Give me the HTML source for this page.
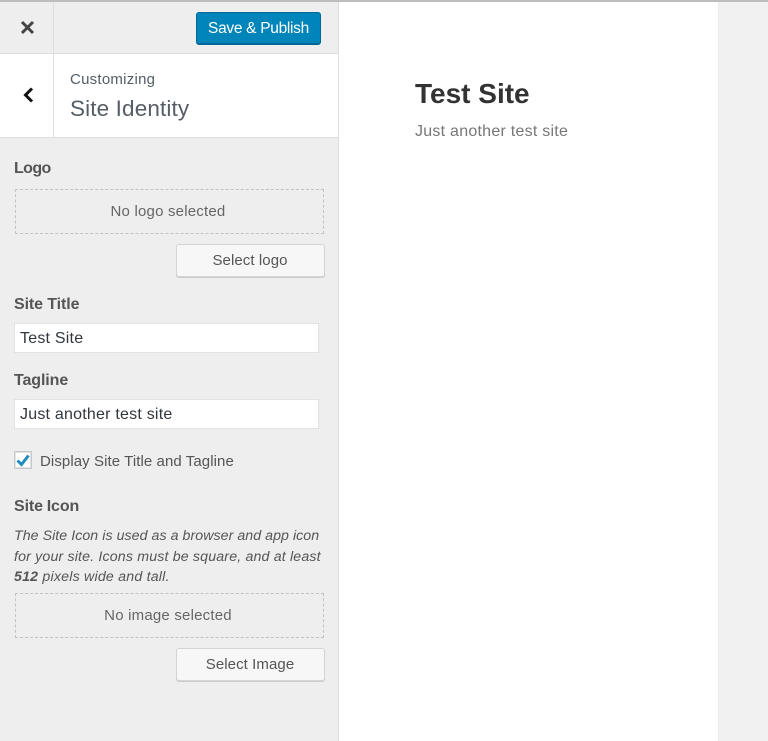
<!DOCTYPE html>
<html><head><meta charset="utf-8"><style>
*{box-sizing:border-box}
html,body{margin:0;padding:0;width:768px;height:741px;overflow:hidden;background:#fff;font-family:"Liberation Sans",sans-serif}
.a{position:absolute;white-space:nowrap}
.l{font-weight:bold;color:#555;font-size:16px;line-height:20px}
.t{color:#555d66}
.box{position:absolute;left:15px;width:309px;height:45px;border:1px dashed #c2c2c2;text-align:center;color:#666;font-size:15px;line-height:43px;letter-spacing:.2px;padding-right:3px}
.btn{position:absolute;left:176px;width:149px;height:33px;background:#f7f7f7;border:1px solid #d4d4d4;border-radius:3px;box-shadow:0 1px 0 #ccc;text-align:center;color:#555;font-size:15px;line-height:32px;letter-spacing:.08px;padding-right:1px}
.inp{position:absolute;left:14px;width:305px;height:30px;background:#fff;border:1px solid #e2e2e2;color:#32373c;font-size:16px;line-height:29px;padding-left:5px;letter-spacing:.22px}
</style></head><body>
<div class="a" style="left:0;top:0;width:768px;height:2px;background:#bdbdbd"></div>
<div class="a" style="left:718px;top:2px;width:50px;height:739px;background:#f1f1f1;border-left:1px solid #ececec"></div>
<div class="a" style="left:0;top:2px;width:339px;height:739px;background:#eee;border-right:1px solid #ddd"></div>
<div class="a" style="left:0;top:53px;width:339px;height:85px;background:#fff;border-top:1px solid #ddd;border-bottom:1px solid #ddd;border-right:1px solid #ddd"></div>
<div class="a" style="left:53px;top:2px;width:1px;height:135px;background:#ddd"></div>
<svg class="a" style="left:20px;top:20px" width="15" height="15" viewBox="0 0 15 15"><path d="M2 2L13 13M13 2L2 13" stroke="#444" stroke-width="3" fill="none"/></svg>
<svg class="a" style="left:22px;top:86px" width="12" height="18" viewBox="0 0 12 18"><path d="M10 2.5L3.5 9L10 15.5" stroke="#111" stroke-width="3" fill="none"/></svg>
<div class="a" style="left:196px;top:12px;width:125px;height:33px;background:#0085ba;border:1px solid #006799;border-bottom-width:2px;border-radius:3px;color:#fff;font-size:15.5px;line-height:32px;text-align:center;letter-spacing:-.3px">Save &amp; Publish</div>
<div class="a t" style="left:70px;top:71px;font-size:15px;line-height:18px;letter-spacing:.25px">Customizing</div>
<div class="a t" style="left:70px;top:95px;font-size:22.5px;line-height:28px;letter-spacing:.13px">Site Identity</div>
<div class="a l" style="left:14px;top:159px;letter-spacing:-.6px">Logo</div>
<div class="box" style="top:189px">No logo selected</div>
<div class="btn" style="top:244px">Select logo</div>
<div class="a l" style="left:14px;top:295px;letter-spacing:-.1px">Site Title</div>
<div class="inp" style="top:323px">Test Site</div>
<div class="a l" style="left:14px;top:371px;letter-spacing:-.1px">Tagline</div>
<div class="inp" style="top:399px">Just another test site</div>
<div class="a" style="left:14px;top:451px;width:18px;height:18px;background:#fff;border:1px solid #c4c8cc;box-shadow:0 0 0 1px #e2e2e2 inset"></div>
<svg class="a" style="left:15px;top:452px" width="16" height="16" viewBox="0 0 16 16"><path d="M2.5 8.5L6.5 12.5L13.5 3.5" stroke="#1e8cbe" stroke-width="3" fill="none"/></svg>
<div class="a" style="left:40px;top:452px;color:#555;font-size:15px;line-height:20px;letter-spacing:.08px">Display Site Title and Tagline</div>
<div class="a l" style="left:14px;top:497px;letter-spacing:-.1px;word-spacing:-.6px">Site Icon</div>
<div class="a" style="left:14px;top:526px;color:#555;font-size:14.2px;line-height:20.5px;font-style:italic"><span style="letter-spacing:.05px">The Site Icon is used as a browser and app icon</span><br><span style="letter-spacing:.16px">for your site. Icons must be square, and at least</span><br><span style="letter-spacing:.2px"><b>512</b> pixels wide and tall.</span></div>
<div class="box" style="top:593px">No image selected</div>
<div class="btn" style="top:648px">Select Image</div>
<div class="a" style="left:415px;top:77px;color:#333;font-size:28px;line-height:34px;font-weight:bold;letter-spacing:0">Test Site</div>
<div class="a" style="left:415px;top:122px;color:#777;font-size:16px;line-height:20px;letter-spacing:.25px">Just another test site</div>
</body></html>
